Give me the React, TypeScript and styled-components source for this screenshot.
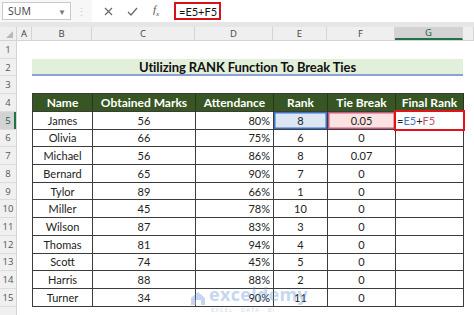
import React from 'react';
import styled, { createGlobalStyle, css } from 'styled-components';

const ROW_H = 17.73;

const GlobalStyle = createGlobalStyle`
  html, body {
    margin: 0;
    padding: 0;
    background: #fff;
    overflow: hidden;
  }
  body {
    font-family: Lato, 'Liberation Sans', sans-serif;
  }
`;

const Window = styled.div`
  width: 474px;
  height: 315px;
  position: relative;
  overflow: hidden;
  background: #fff;
`;

/* ---------- formula bar ---------- */

const FormulaBar = styled.div`
  display: flex;
  align-items: center;
  height: 22px;
  background: #f7f7f7;
  padding-left: 2px;
`;

const NameBox = styled.div`
  box-sizing: border-box;
  width: 69px;
  height: 18px;
  display: flex;
  align-items: center;
  justify-content: space-between;
  padding: 0 4px 0 5px;
  background: #fff;
  border: 1px solid #c9c9c9;
  font: 10.5px 'Open Sans', sans-serif;
  color: #444;
`;

const Caret = styled.span`
  font-size: 8px;
  color: #777;
`;

const Grip = styled.div`
  width: 21px;
  text-align: center;
  color: #c8c8c8;
  font: 11px 'Open Sans', sans-serif;
`;

const ButtonGroup = styled.div`
  display: flex;
  align-items: center;
  height: 22px;
  background: #fff;
  padding-left: 5px;
  width: 76px;
`;

const BarButton = styled.div<{ $w: number }>`
  width: ${p => p.$w}px;
  display: flex;
  justify-content: center;
  align-items: center;
  color: #666;
`;

const Fx = styled.span`
  font: italic 11px 'Liberation Serif', serif;
  color: #555;
`;

const FormulaInput = styled.div`
  flex: 1;
  height: 22px;
  display: flex;
  align-items: center;
  background: #fff;
  padding-left: 1px;
`;

const FormulaText = styled.div`
  box-sizing: border-box;
  width: 47px;
  height: 18px;
  border: 2px solid #d8121c;
  display: flex;
  align-items: center;
  padding-left: 3px;
  font: 11px Lato, sans-serif;
  color: #111;
`;

const Band = styled.div`
  height: 5px;
  background: #e6e6e6;
`;

/* ---------- column headers ---------- */

const ColumnHeaders = styled.div`
  display: flex;
  height: 14px;
  background: #efefef;
  border-bottom: 1px solid #d4d4d4;
  box-sizing: border-box;
`;

const Corner = styled.div`
  width: 17px;
  position: relative;
  border-right: 1px solid #d4d4d4;
  box-sizing: border-box;
  &::after {
    content: '';
    position: absolute;
    right: 3px;
    bottom: 2px;
    border-left: 7px solid transparent;
    border-bottom: 7px solid #b9b9b9;
  }
`;

const ColHead = styled.div<{ $w: number; $active?: boolean }>`
  width: ${p => p.$w}px;
  box-sizing: border-box;
  display: flex;
  align-items: center;
  justify-content: center;
  font: 9.5px 'Open Sans', sans-serif;
  color: #444;
  border-right: 1px solid #d4d4d4;
  ${p =>
    p.$active &&
    css`
      background: #d3d3d3;
      border-bottom: 2px solid #217346;
      color: #1e5c3a;
    `}
`;

/* ---------- sheet body ---------- */

const Body = styled.div`
  display: flex;
`;

const RowHeads = styled.div`
  width: 17px;
  display: flex;
  flex-direction: column;
  background: #f0f0f0;
  border-right: 1px solid #d4d4d4;
  box-sizing: border-box;
`;

const RowHead = styled.div<{ $active?: boolean }>`
  height: ${ROW_H}px;
  box-sizing: border-box;
  display: flex;
  align-items: center;
  justify-content: center;
  font: 9.5px 'Open Sans', sans-serif;
  color: #555;
  border-bottom: 1px solid #dcdcdc;
  ${p =>
    p.$active &&
    css`
      background: #d3d3d3;
      color: #1e5c3a;
      box-shadow: inset -2px 0 0 #217346;
    `}
`;

const Canvas = styled.div`
  flex: 1;
  display: flex;
  flex-direction: column;
  padding-left: 15px;
`;

const EmptyRow = styled.div`
  height: ${ROW_H}px;
`;

const TitleRow = styled.div`
  height: ${ROW_H}px;
  width: 431px;
  box-sizing: border-box;
  display: flex;
  align-items: center;
  justify-content: center;
  background: #e2efda;
  border-bottom: 2px solid #8e9fd6;
  font: bold 13px Lato, sans-serif;
  color: #111;
  letter-spacing: -0.1px;
`;

const Table = styled.div`
  display: grid;
  grid-template-columns: 60px 103px 78px 54px 68px 68px;
  grid-template-rows: repeat(12, ${ROW_H}px);
  border-left: 1px solid #3c3c3c;
  border-top: 1px solid #3c3c3c;
  width: 432px;
  box-sizing: border-box;
  margin-top: -1px;
`;

type Tint = 'blue' | 'red' | 'final';

const Cell = styled.div<{ $head?: boolean; $align?: 'center' | 'right' | 'left'; $tint?: Tint }>`
  position: relative;
  box-sizing: border-box;
  border-right: 1px solid #3c3c3c;
  border-bottom: 1px solid #3c3c3c;
  display: flex;
  align-items: center;
  justify-content: ${p =>
    p.$align === 'right' ? 'flex-end' : p.$align === 'left' ? 'flex-start' : 'center'};
  padding: 0 3px;
  font: 11px Lato, sans-serif;
  color: #222;
  background: #fff;
  ${p =>
    p.$head &&
    css`
      background: #375623;
      color: #fff;
      font-weight: bold;
      font-size: 12px;
      border-right-color: #24381a;
    `}
  ${p =>
    p.$tint === 'blue' &&
    css`
      background: #dde7f4;
      box-shadow: inset 0 0 0 1.5px #3f72c7;
    `}
  ${p =>
    p.$tint === 'red' &&
    css`
      background: #fbe3e4;
      box-shadow: inset 0 0 0 1.5px #c65a78;
    `}
  ${p =>
    p.$tint === 'final' &&
    css`
      padding-left: 1px;
      &::after {
        content: '';
        position: absolute;
        left: -2px;
        top: -2px;
        right: -2px;
        bottom: -2px;
        border: 2px solid #e3121b;
        z-index: 2;
      }
    `}
`;

const RefBlue = styled.span`
  color: #3f72c7;
`;

const RefRed = styled.span`
  color: #c0506e;
`;

/* ---------- watermark ---------- */

const Watermark = styled.div`
  position: absolute;
  left: 190px;
  top: 282px;
  display: flex;
  align-items: center;
  gap: 3px;
  opacity: 0.35;
  pointer-events: none;
`;

const MarkWord = styled.div`
  display: flex;
  flex-direction: column;
  line-height: 1;
  color: #5b8fd6;
`;

const MarkBig = styled.span`
  font: bold 18px 'Open Sans', sans-serif;
  letter-spacing: 0.3px;
`;

const MarkSmall = styled.span`
  font: 6px 'Open Sans', sans-serif;
  letter-spacing: 1px;
  margin-left: 2px;
`;

const columns = [
  { key: 'A', w: 15 },
  { key: 'B', w: 60 },
  { key: 'C', w: 103 },
  { key: 'D', w: 78 },
  { key: 'E', w: 54 },
  { key: 'F', w: 68 },
  { key: 'G', w: 68 },
  { key: 'H', w: 11 },
];

const heads = ['Name', 'Obtained Marks', 'Attendance', 'Rank', 'Tie Break', 'Final Rank'];

const students: [string, number, string, number, string][] = [
  ['James', 56, '80%', 8, '0.05'],
  ['Olivia', 66, '75%', 6, '0'],
  ['Michael', 56, '86%', 8, '0.07'],
  ['Bernard', 65, '90%', 7, '0'],
  ['Tylor', 89, '66%', 1, '0'],
  ['Miller', 45, '78%', 10, '0'],
  ['Wilson', 87, '83%', 3, '0'],
  ['Thomas', 81, '94%', 4, '0'],
  ['Scott', 74, '45%', 5, '0'],
  ['Harris', 88, '88%', 2, '0'],
  ['Turner', 34, '90%', 11, '0'],
];

export default function App() {
  return (
    <Window>
      <GlobalStyle />
      <FormulaBar>
        <NameBox>
          SUM
          <Caret>▼</Caret>
        </NameBox>
        <Grip>⋮</Grip>
        <ButtonGroup>
          <BarButton $w={22}>
            <svg width="9" height="9" viewBox="0 0 9 9">
              <path d="M1 1 L8 8 M8 1 L1 8" stroke="#666" strokeWidth="1.1" />
            </svg>
          </BarButton>
          <BarButton $w={26}>
            <svg width="11" height="9" viewBox="0 0 11 9">
              <path d="M1 5 L4 8 L10 1" stroke="#666" strokeWidth="1.2" fill="none" />
            </svg>
          </BarButton>
          <BarButton $w={22}>
            <Fx>
              f<sub style={{ fontSize: 7 }}>x</sub>
            </Fx>
          </BarButton>
        </ButtonGroup>
        <FormulaInput>
          <FormulaText>=E5+F5</FormulaText>
        </FormulaInput>
      </FormulaBar>
      <Band />
      <ColumnHeaders>
        <Corner />
        {columns.map(c => (
          <ColHead key={c.key} $w={c.w} $active={c.key === 'G'}>
            {c.key === 'H' ? '' : c.key}
          </ColHead>
        ))}
      </ColumnHeaders>
      <Body>
        <RowHeads>
          {Array.from({ length: 16 }, (_, i) => (
            <RowHead key={i} $active={i === 4}>
              {i < 15 ? i + 1 : ''}
            </RowHead>
          ))}
        </RowHeads>
        <Canvas>
          <EmptyRow />
          <TitleRow>Utilizing RANK Function To Break Ties</TitleRow>
          <EmptyRow />
          <Table>
            {heads.map(h => (
              <Cell key={h} $head>
                {h}
              </Cell>
            ))}
            {students.map(([name, marks, att, rank, tie], i) => (
              <React.Fragment key={name}>
                <Cell>{name}</Cell>
                <Cell>{marks}</Cell>
                <Cell $align="right">{att}</Cell>
                <Cell $tint={i === 0 ? 'blue' : undefined}>{rank}</Cell>
                <Cell $tint={i === 0 ? 'red' : undefined}>{tie}</Cell>
                <Cell $align="left" $tint={i === 0 ? 'final' : undefined}>
                  {i === 0 && (
                    <span>
                      =<RefBlue>E5</RefBlue>+<RefRed>F5</RefRed>
                    </span>
                  )}
                </Cell>
              </React.Fragment>
            ))}
          </Table>
        </Canvas>
      </Body>
      <Watermark>
        <svg width="16" height="16" viewBox="0 0 16 16">
          <path d="M1 8 L8 2 L15 8 L15 15 L1 15 Z" fill="#5b8fd6" />
          <path d="M5 15 L5 10 L11 10 L11 15" fill="#fff" />
        </svg>
        <MarkWord>
          <MarkBig>exceldemy</MarkBig>
          <MarkSmall>EXCEL · DATA · BI</MarkSmall>
        </MarkWord>
      </Watermark>
    </Window>
  );
}
